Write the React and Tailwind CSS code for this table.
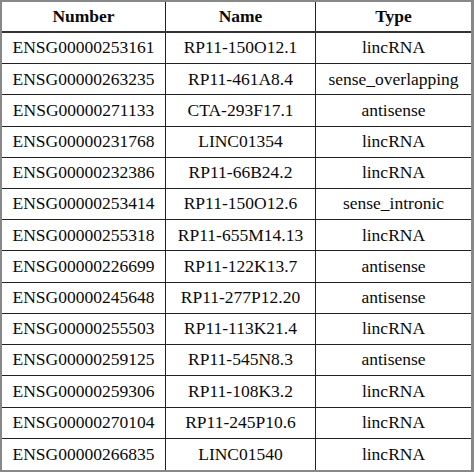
import React from 'react';

const rows = [
  ['ENSG00000253161', 'RP11-150O12.1', 'lincRNA'],
  ['ENSG00000263235', 'RP11-461A8.4', 'sense_overlapping'],
  ['ENSG00000271133', 'CTA-293F17.1', 'antisense'],
  ['ENSG00000231768', 'LINC01354', 'lincRNA'],
  ['ENSG00000232386', 'RP11-66B24.2', 'lincRNA'],
  ['ENSG00000253414', 'RP11-150O12.6', 'sense_intronic'],
  ['ENSG00000255318', 'RP11-655M14.13', 'lincRNA'],
  ['ENSG00000226699', 'RP11-122K13.7', 'antisense'],
  ['ENSG00000245648', 'RP11-277P12.20', 'antisense'],
  ['ENSG00000255503', 'RP11-113K21.4', 'lincRNA'],
  ['ENSG00000259125', 'RP11-545N8.3', 'antisense'],
  ['ENSG00000259306', 'RP11-108K3.2', 'lincRNA'],
  ['ENSG00000270104', 'RP11-245P10.6', 'lincRNA'],
  ['ENSG00000266835', 'LINC01540', 'lincRNA'],
];

const Cell = ({ children, last, bold }) => (
  <div
    className={`flex items-center justify-center ${last ? '' : 'border-r border-[#222]'} ${bold ? 'font-bold' : ''}`}
  >
    {children}
  </div>
);

export default function App() {
  return (
    <div className="w-[474px] h-[472px] bg-white border-t-2 border-l-2 border-b-2 border-r-[3px] border-[#888] text-[#0a0a0a] text-[17.5px] leading-none font-['Liberation_Serif']">
      <div className="grid h-full grid-cols-[164px_150px_1fr] grid-rows-[31px_repeat(14,1fr)]">
        {/* header */}
        <div className="col-span-3 grid grid-cols-subgrid border-b-2 border-[#333]">
          <Cell bold>Number</Cell>
          <Cell bold>Name</Cell>
          <Cell bold last>Type</Cell>
        </div>
        {rows.map((r, i) => (
          <div
            key={r[0]}
            className={`col-span-3 grid grid-cols-subgrid ${i < rows.length - 1 ? 'border-b border-[#222]' : ''}`}
          >
            <Cell>{r[0]}</Cell>
            <Cell>{r[1]}</Cell>
            <Cell last>{r[2]}</Cell>
          </div>
        ))}
      </div>
    </div>
  );
}
